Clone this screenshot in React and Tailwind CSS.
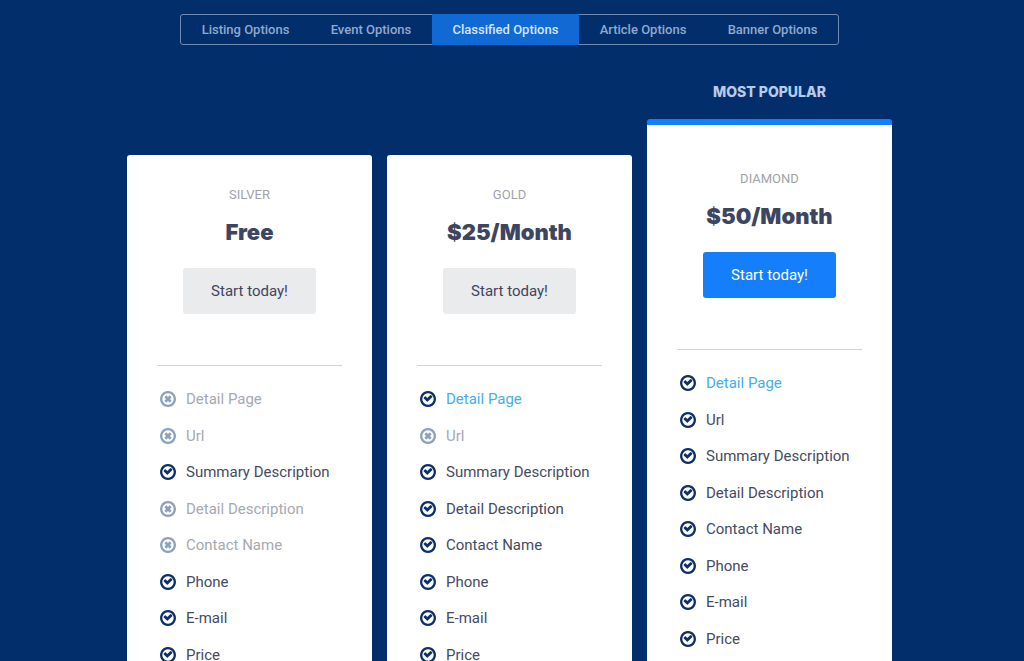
import React from 'react'

const tabs = ['Listing Options', 'Event Options', 'Classified Options', 'Article Options', 'Banner Options']

const features = [
  'Detail Page',
  'Url',
  'Summary Description',
  'Detail Description',
  'Contact Name',
  'Phone',
  'E-mail',
  'Price',
]

const plans = [
  { name: 'Silver', price: 'Free', missing: ['Detail Page', 'Url', 'Detail Description', 'Contact Name'] },
  { name: 'Gold', price: '$25/Month', missing: ['Url'] },
  { name: 'Diamond', price: '$50/Month', missing: [], popular: true },
]

const RING =
  'M1312 896q0-148-73-273t-198-198-273-73-273 73-198 198-73 273 73 273 198 198 273 73 273-73 198-198 73-273zm224 0q0 209-103 385.5t-279.5 279.5-385.5 103-385.5-103-279.5-279.5-103-385.5 103-385.5 279.5-279.5 385.5-103 385.5 103 279.5 279.5 103 385.5z'
const CHECK =
  'M1171 723l-422 422q-19 19-45 19t-45-19l-294-294q-19-19-19-45t19-45l102-102q19-19 45-19t45 19l147 147 275-275q19-19 45-19t45 19l102 102q19 19 19 45t-19 45z'
const CROSS =
  'M1097 1079l-146 146q-10 10-23 10t-23-10l-137-137-137 137q-10 10-23 10t-23-10l-146-146q-10-10-10-23t10-23l137-137-137-137q-10-10-10-23t10-23l146-146q10-10 23-10t23 10l137 137 137-137q10-10 23-10t23 10l146 146q10 10 10 23t-10 23l-137 137 137 137q10 10 10 23t-10 23z'

const StatusIcon = ({ included }) => (
  <svg
    viewBox="0 128 1536 1536"
    fill="currentColor"
    aria-hidden="true"
    className={included ? 'size-4 shrink-0 text-[#0d2f6b]' : 'size-4 shrink-0 text-[#8ca1bf]'}
  >
    <path d={RING} />
    <path d={included ? CHECK : CROSS} />
  </svg>
)

const Feature = ({ label, included }) => {
  const link = label === 'Detail Page' && included
  return (
    <li className="flex items-center gap-2.5">
      <StatusIcon included={included} />
      {link ? (
        <a href="#detail" className="text-[#45aee8]">{label}</a>
      ) : (
        <span className={included ? 'text-[#464b60]' : 'text-[#a5a9b1]'}>{label}</span>
      )}
    </li>
  )
}

const PlanCard = ({ plan }) => (
  <section className="flex-1">
    {plan.popular && (
      <p className="h-[43px] pt-1.5 text-center font-['Inter',sans-serif] text-sm leading-5 font-extrabold text-[#b9cbe6]">
        MOST POPULAR
      </p>
    )}
    <div
      className={
        plan.popular
          ? 'rounded-[3px] border-t-[6px] border-[#157efb] bg-white px-[30px] pt-11 pb-8'
          : 'mt-[79px] rounded-[3px] bg-white px-[30px] pt-[30px] pb-8'
      }
    >
      <div className="flex flex-col items-center">
        <h3 className="text-[13px] leading-5 text-[#a0a3aa] uppercase">{plan.name}</h3>
        <p className="mt-[13px] font-['Inter',sans-serif] text-[22px] leading-7 font-black text-[#3e4560]">
          {plan.price}
        </p>
        <button
          type="button"
          className={
            plan.popular
              ? 'mt-[22px] h-[46px] w-[133px] rounded-[3px] bg-[#157efb] text-[15px] text-white'
              : 'mt-[22px] h-[46px] w-[133px] rounded-[3px] bg-[#e9ebec] text-[15px] text-[#3e4560]'
          }
        >
          Start today!
        </button>
      </div>
      <hr className="mt-[51px] border-[#d4d4d6]" />
      <ul className="mt-[15px] grid min-h-[292px] auto-rows-fr pl-[3px] text-[15px] leading-5">
        {features.map((label) => (
          <Feature key={label} label={label} included={!plan.missing.includes(label)} />
        ))}
      </ul>
    </div>
  </section>
)

const App = () => {
  return (
    <main className="h-screen overflow-hidden bg-[#022f6c] pt-3.5 pr-[132px] pl-[127px] font-['Roboto',sans-serif]">
      <nav className="mx-[53px] flex h-[31px] rounded-[3px] border border-[#6f8bb5] text-[13px] font-medium">
        {tabs.map((tab) => (
          <button
            key={tab}
            type="button"
            className={
              tab === 'Classified Options'
                ? '-my-px flex-auto bg-[#1169d3] text-[#d5e6fb]'
                : 'flex-auto text-[#90a9cc]'
            }
          >
            {tab}
          </button>
        ))}
      </nav>
      <div className="mt-[31px] flex items-start gap-[15px]">
        {plans.map((plan) => (
          <PlanCard key={plan.name} plan={plan} />
        ))}
      </div>
    </main>
  )
}

export default App
